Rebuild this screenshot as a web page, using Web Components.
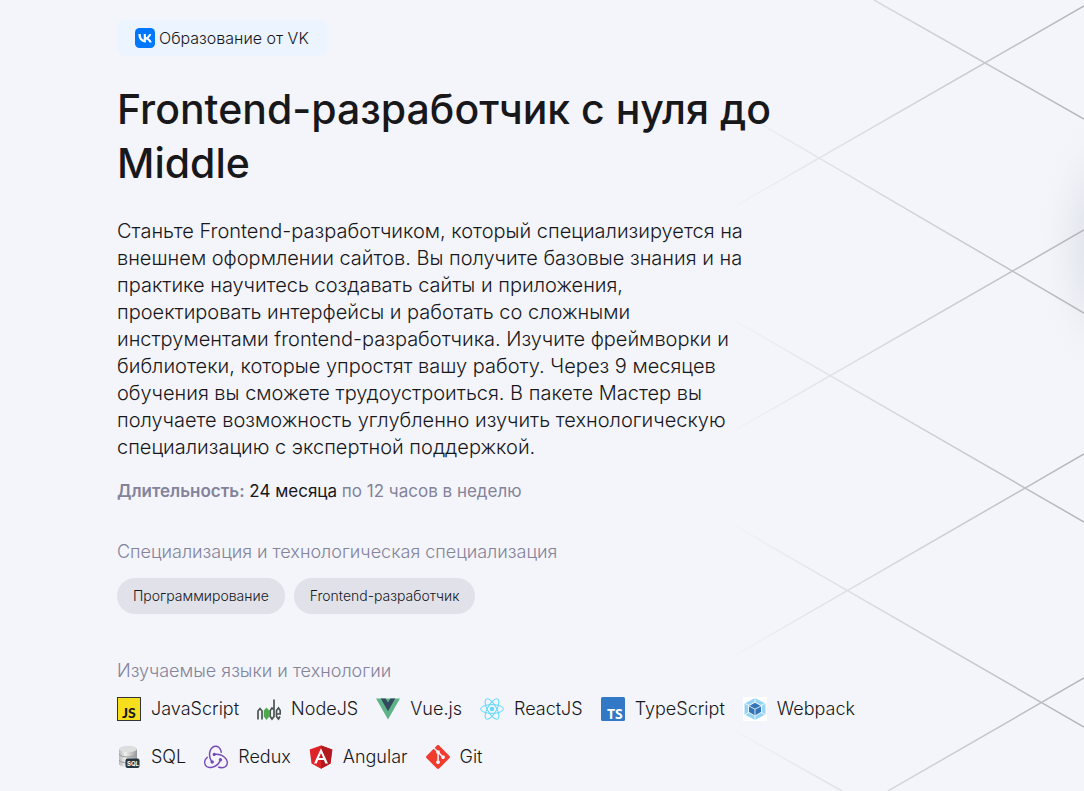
<!DOCTYPE html>
<html lang="ru">
<head>
<meta charset="utf-8">
<meta name="viewport" content="width=device-width, initial-scale=1">
<title>Frontend-разработчик с нуля до Middle</title>
<style>
  body {
    margin: 0;
    background: #f4f5fb;
    color: #18181b;
    font-family: Inter, "Noto Sans", sans-serif;
    --muted: #83839a;
    --chip: #e0e1e9;
  }
</style>
</head>
<body>
<course-page>
  <vendor-badge slot="badge">Образование от VK</vendor-badge>
  <course-intro>
    <span slot="title">Frontend-разработчик с нуля до Middle</span>
    Станьте Frontend-разработчиком, который специализируется на
    внешнем оформлении сайтов. Вы получите базовые знания и на
    практике научитесь создавать сайты и приложения,
    проектировать интерфейсы и работать со сложными
    инструментами frontend-разработчика. Изучите фреймворки и
    библиотеки, которые упростят вашу работу. Через 9 месяцев
    обучения вы сможете трудоустроиться. В пакете Мастер вы
    получаете возможность углубленно изучить технологическую
    специализацию с экспертной поддержкой.
  </course-intro>
  <course-duration label="Длительность:" term="24 месяца">по 12 часов в неделю</course-duration>
  <course-section label="Специализация и технологическая специализация" class="tags">
    <course-tag>Программирование</course-tag>
    <course-tag>Frontend-разработчик</course-tag>
  </course-section>
  <course-section label="Изучаемые языки и технологии" class="techs">
    <tech-item icon="js">JavaScript</tech-item>
    <tech-item icon="node">NodeJS</tech-item>
    <tech-item icon="vue">Vue.js</tech-item>
    <tech-item icon="react">ReactJS</tech-item>
    <tech-item icon="ts">TypeScript</tech-item>
    <tech-item icon="webpack">Webpack</tech-item>
    <tech-item icon="sql">SQL</tech-item>
    <tech-item icon="redux">Redux</tech-item>
    <tech-item icon="angular">Angular</tech-item>
    <tech-item icon="git">Git</tech-item>
  </course-section>
</course-page>

<script>
(function() {
  // 24x24 icons, looked up by the icon attribute of tech-item
  const icons = {
    js: `<rect width="24" height="24" fill="#33333b"/><rect x="1" y="1" width="22" height="22" fill="#f7df1e"/>
      <text x="5" y="21" font-family="Lato" font-size="14" font-weight="900" fill="#18181b">JS</text>`,
    node: `<path d="M9.500 10.500l2.700 3v6l-2.700 3.500-2.700-3.500v-6z" fill="#4caa4c"/>
      <g fill="none" stroke="#4a5552" stroke-width="1.700"><path d="M1 22.500v-8.500l2-2.500 2 2.500V22.500M17 2.500v17l-2 2.500-1.800-2.500v-6l1.800-2.500 2 2M23 19.500l-1.500 2.500-2-2.500v-6l2-2.500 1.700 2.500v3.500h-3"/></g>`,
    vue: `<path d="M0 1.500h24L12 22.500z" fill="#5eb389"/><path d="M4.800 1.500h4.700l2.500 4 2.500-4h4.700L12 14.300z" fill="#34495e"/>`,
    react: `<circle cx="12" cy="12" r="2.200" fill="#61dafb"/><g fill="none" stroke="#61dafb">
      <ellipse cx="12" cy="12" rx="11.400" ry="4.400"/>
      <ellipse cx="12" cy="12" rx="11.400" ry="4.400" transform="rotate(60 12 12)"/>
      <ellipse cx="12" cy="12" rx="11.400" ry="4.400" transform="rotate(120 12 12)"/></g>`,
    ts: `<rect width="24" height="24" rx="1.500" fill="#3178c6"/>
      <text x="6" y="22" font-family="Open Sans" font-size="14" font-weight="700" fill="#fff">TS</text>`,
    webpack: `<path d="M0 0h24v24H0z" fill="#fff"/><path d="M12 1l10.500 5.500v11L12 23 1.500 17.500v-11z" fill="#96d4f5"/>
      <path d="M12 4.700l6.800 3.800v7L12 19.300l-6.800-3.800v-7z" fill="#fff"/>
      <path d="M12 5.700l6 3.200v6.200L12 18.500l-6-3.400V8.900z" fill="#3474b9"/>
      <path d="M6 9l6 3.200L18 9M12 12.200v6.300M12 1v4.500M12 19v4M2 17.500l4-2M22 17.500l-4-2M2 6.500l4 2M22 6.500l-4 2" stroke="#fff" stroke-width=".8" fill="none"/>`,
    sql: `<defs><linearGradient id="steel"><stop stop-color="#b8b8b8"/><stop offset=".35" stop-color="#f0f0f0"/><stop offset="1" stop-color="#999"/></linearGradient></defs>
      <path d="M2 4v15c0 4 18 4 18 0V4z" fill="url(#steel)"/><ellipse cx="11" cy="4" rx="9" ry="3.300" fill="#dedede"/>
      <path d="M2 9c2 4 16 4 18 0M2 15c2 4 16 4 18 0" fill="none" stroke="#999"/>
      <rect x="8.500" y="13.500" width="14" height="9.500" rx="2" fill="#263442"/>
      <text x="10" y="20.500" font-family="Inter" font-size="6" font-weight="700" fill="#fff">SQL</text>`,
    redux: `<path fill="#764abc" d="M16.633 16.504c.869-.075 1.543-.84 1.499-1.754-.06-.914-.81-1.648-1.708-1.648h-.061a1.71 1.71 0 00-1.648 1.769c.03.479.226.869.494 1.153-1.048 2.038-2.621 3.535-5.005 4.795-1.603.838-3.296 1.154-4.944.93-1.378-.195-2.456-.81-3.116-1.799-.988-1.499-1.078-3.116-.255-4.734.601-1.166 1.499-2.023 2.099-2.443-.15-.389-.33-1.048-.42-1.542-4.436 3.177-3.985 7.521-2.637 9.574 1.004 1.498 3.057 2.456 5.304 2.456.599 0 1.229-.044 1.843-.194 3.896-.749 6.847-3.086 8.540-6.532zM21.982 12.758c-2.321-2.727-5.738-4.225-9.634-4.225h-.51c-.253-.554-.837-.899-1.498-.899h-.045c-.943 0-1.678.81-1.647 1.753.03.898.794 1.648 1.708 1.648h.074c.675-.03 1.259-.45 1.498-1.049h.555c2.309 0 4.495.674 6.488 1.992 1.527 1.005 2.622 2.323 3.237 3.896.538 1.288.509 2.547-.045 3.597-.855 1.647-2.294 2.517-4.196 2.517-1.199 0-2.367-.375-2.967-.644-.36.298-.96.793-1.394 1.093 1.318.598 2.652.943 3.940.943 2.922 0 5.094-1.647 5.919-3.236.898-1.798.824-4.824-1.470-7.416zM6.490 17.042c.029.899.793 1.648 1.708 1.648h.06c.959-.03 1.693-.82 1.648-1.768 0-.9-.779-1.647-1.693-1.647h-.06c-.06 0-.149 0-.226.029-1.243-2.098-1.768-4.347-1.572-6.772.12-1.828.72-3.417 1.797-4.735.899-1.124 2.593-1.678 3.747-1.708 3.236-.061 4.585 3.971 4.689 5.574l1.498.45c-.345-4.914-3.400-7.492-6.322-7.492-2.742 0-5.273 1.993-6.293 4.915-1.393 3.896-.479 7.641 1.229 10.638-.149.195-.239.539-.209.868z"/>`,
    angular: `<path d="M12 .5L.700 4.500l1.800 14L12 23.800l9.500-5.300 1.800-14z" fill="#df2226"/><path d="M12 .5v23.300l9.500-5.300 1.800-14z" fill="#b21a20"/>
      <path fill="#fff" fill-rule="evenodd" d="M12 3.200L5 18.500h2.700l1.400-3.400h5.800l1.400 3.400H19zM12 8l2.100 4.900H9.900z"/>`,
    git: `<path fill="#f03c2e" d="M23.546 10.930L13.067.452c-.604-.603-1.582-.603-2.188 0L8.708 2.627l2.760 2.760c.645-.215 1.379-.07 1.889.441.516.515.658 1.258.438 1.900l2.658 2.660c.645-.223 1.387-.078 1.900.435.721.72.721 1.884 0 2.604-.719.719-1.881.719-2.600 0-.539-.541-.674-1.337-.404-1.996L12.860 8.955v6.525c.176.086.342.203.488.348.713.721.713 1.883 0 2.600-.719.721-1.889.721-2.609 0-.719-.719-.719-1.879 0-2.598.182-.18.387-.316.605-.406V8.835c-.217-.091-.424-.222-.6-.401-.545-.545-.676-1.342-.396-2.009L7.636 3.700.45 10.881c-.6.605-.6 1.584 0 2.189l10.480 10.477c.604.604 1.582.604 2.186 0l10.430-10.430c.605-.603.605-1.582 0-2.187"/>`
  };

  const templates = {};

  templates.page = `
    <style>
    :host {
      display: block;
      position: relative;
      overflow: hidden;
      min-height: 100vh;
      box-sizing: border-box;
      padding: 20px 117px;
    }
    .mesh {
      position: absolute;
      top: 0;
      right: 0;
      width: 360px;
      height: 791px;
    }
    main {
      position: relative;
      max-width: 800px;
    }
    </style>
    <svg class="mesh" viewBox="0 0 360 791" aria-hidden="true">
      <defs>
        <linearGradient id="fade" gradientUnits="userSpaceOnUse" x1="0" y1="0" x2="360" y2="0">
          <stop stop-color="#b4b4b8" stop-opacity="0"/>
          <stop offset="1" stop-color="#b4b4b8"/>
        </linearGradient>
        <radialGradient id="glow">
          <stop stop-color="#d3d7df"/>
          <stop offset=".45" stop-color="#e3e6ed" stop-opacity=".8"/>
          <stop offset=".75" stop-color="#eff1f7" stop-opacity=".6"/>
          <stop offset="1" stop-color="#f4f5fb" stop-opacity="0"/>
        </radialGradient>
      </defs>
      <ellipse cx="392" cy="246" rx="84" ry="150" fill="url(#glow)"/>
      <path fill="none" stroke="url(#fade)" stroke-width="1.500"
        d="M150 0L360 119M8 107L360 313M8 319L360 522M8 524L360 727M6 728L118 791
           M360 6L8 208M360 230L8 432M360 454L5 659M360 678L164 791"/>
    </svg>
    <main>
      <slot name="badge"></slot>
      <slot></slot>
    </main>`;

  templates.badge = `
    <style>
    :host {
      display: inline-flex;
      align-items: center;
      gap: 4px;
      height: 36px;
      padding: 0 18px;
      border-radius: 8px;
      background: #ebf4ff;
      font-size: 16px;
      font-weight: 300;
      vertical-align: top;
    }
    </style>
    <svg width="20" height="20" viewBox="0 0 48 48" aria-hidden="true">
      <rect width="48" height="48" rx="11" fill="#07f"/>
      <path fill="#fff" d="M25.540 34.580C14.600 34.580 8.360 27.080 8.100 14.600H13.580C13.760 23.760 17.800 27.640 21 28.440V14.600H26.160V22.500C29.320 22.160 32.640 18.560 33.760 14.600H38.920C38.060 19.480 34.460 23.080 31.900 24.560C34.460 25.760 38.560 28.900 40.120 34.580H34.440C33.220 30.780 30.180 27.840 26.160 27.440V34.580Z"/>
    </svg>
    <span><slot></slot></span>`;

  templates.intro = `
    <style>
    :host {
      display: block;
      max-width: 700px;
    }
    h1 {
      margin: 26px 0 28px;
      font-size: 41px;
      line-height: 54px;
      font-weight: 500;
    }
    p {
      margin: 0;
      max-width: 650px;
      font-size: 20px;
      line-height: 27px;
      font-weight: 300;
    }
    </style>
    <h1><slot name="title"></slot></h1>
    <p><slot></slot></p>`;

  templates.duration = `
    <style>
    :host {
      display: block;
      margin-top: 18px;
      color: var(--muted);
      font-size: 17px;
      line-height: 24px;
    }
    b { font-weight: 600; }
    .term {
      color: #18181b;
      font-weight: 400;
    }
    </style>
    <b></b> <span class="term"></span> <slot></slot>`;

  templates.section = `
    <style>
    :host { display: block; }
    :host(.tags) { margin-top: 37px; }
    :host(.techs) { margin-top: 45px; }
    h2 {
      margin: 0 0 14px;
      color: var(--muted);
      font-size: 18px;
      line-height: 24px;
      font-weight: 300;
    }
    .items {
      display: flex;
      flex-wrap: wrap;
      gap: 9px;
    }
    :host(.techs) .items {
      gap: 24px 18px;
    }
    </style>
    <h2></h2>
    <div class="items"><slot></slot></div>`;

  templates.tag = `
    <style>
    :host { display: block; }
    a {
      display: block;
      padding: 0 16px;
      border-radius: 18px;
      background: var(--chip);
      color: #18181b;
      font-size: 14px;
      line-height: 36px;
      font-weight: 300;
      text-decoration: none;
    }
    </style>
    <a href="#"><slot></slot></a>`;

  templates.tech = `
    <style>
    :host {
      display: flex;
      align-items: center;
      gap: 10px;
      font-size: 18px;
      line-height: 24px;
      font-weight: 300;
    }
    svg { flex: none; }
    </style>
    <svg width="24" height="24" viewBox="0 0 24 24" aria-hidden="true"></svg>
    <span><slot></slot></span>`;

  class CourseElement extends HTMLElement {
    constructor(name) {
      super();
      const template = document.createElement("template");
      template.innerHTML = templates[name];
      this._root = this.attachShadow({ mode: "open" });
      this._root.appendChild(template.content.cloneNode(true));
    }
  }

  class CoursePage extends CourseElement {
    constructor() { super("page"); }
  }

  class VendorBadge extends CourseElement {
    constructor() { super("badge"); }
  }

  class CourseIntro extends CourseElement {
    constructor() { super("intro"); }
  }

  /**
   * label    bold caption in front
   * term     length of the course
   */
  class CourseDuration extends CourseElement {
    constructor() { super("duration"); }
    connectedCallback() {
      this._root.querySelector("b").textContent = this.getAttribute("label");
      this._root.querySelector(".term").textContent = this.getAttribute("term");
    }
  }

  class CourseSection extends CourseElement {
    constructor() { super("section"); }
    connectedCallback() {
      this._root.querySelector("h2").textContent = this.getAttribute("label");
    }
  }

  class CourseTag extends CourseElement {
    constructor() { super("tag"); }
  }

  class TechItem extends CourseElement {
    constructor() { super("tech"); }
    connectedCallback() {
      this._root.querySelector("svg").innerHTML = icons[this.getAttribute("icon")] || "";
    }
  }

  window.customElements.define("course-page", CoursePage);
  window.customElements.define("vendor-badge", VendorBadge);
  window.customElements.define("course-intro", CourseIntro);
  window.customElements.define("course-duration", CourseDuration);
  window.customElements.define("course-section", CourseSection);
  window.customElements.define("course-tag", CourseTag);
  window.customElements.define("tech-item", TechItem);
})();
</script>
</body>
</html>
